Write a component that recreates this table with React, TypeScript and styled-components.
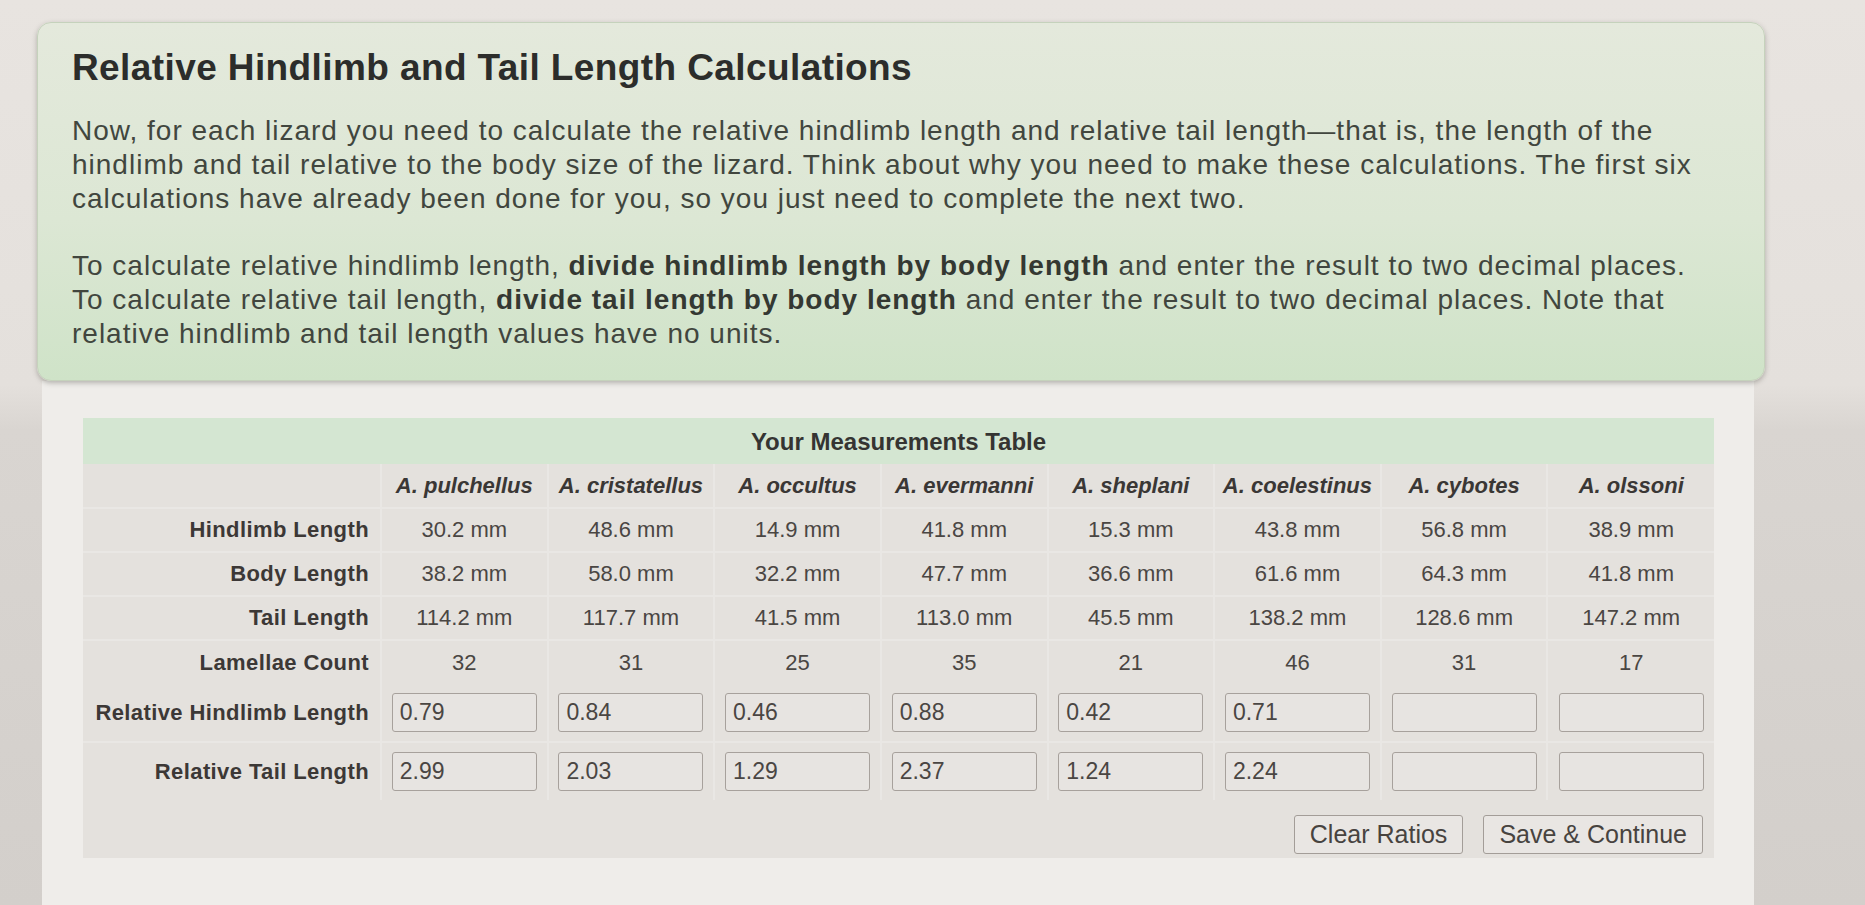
import React from "react";
import styled, { createGlobalStyle } from "styled-components";

const GlobalStyle = createGlobalStyle`
  html, body {
    margin: 0;
    padding: 0;
  }
  body {
    width: 1865px;
    height: 905px;
    overflow: hidden;
    font-family: "Liberation Sans", Arial, Helvetica, sans-serif;
    background: linear-gradient(
      to bottom,
      #e8e4e0 0px,
      #e4e0dc 385px,
      #d9d5d1 430px,
      #d3cfcb 905px
    );
  }
`;

const Page = styled.div`
  display: flex;
  flex-direction: column;
  padding-top: 22px;
  height: 883px;
`;

const Card = styled.section`
  position: relative;
  z-index: 1;
  margin-left: 37px;
  width: 1728px;
  height: 359px;
  box-sizing: border-box;
  padding: 24px 50px 0 34px;
  border-radius: 14px;
  border: 1px solid #c5d2bc;
  background: linear-gradient(to bottom, #e4e9dc 0%, #dce7d4 55%, #cfe3c8 100%);
  box-shadow: 0 2px 5px rgba(70, 70, 60, 0.35);
  color: #41463e;
`;

const Title = styled.h1`
  margin: 0;
  font-size: 37px;
  line-height: 42px;
  font-weight: 700;
  letter-spacing: 0.4px;
  color: #2c2d2b;
`;

const Paragraph = styled.p<{ $gap: number }>`
  margin: ${(p) => p.$gap}px 0 0;
  font-size: 28px;
  line-height: 34px;
  letter-spacing: 1px;

  strong {
    font-weight: 700;
    color: #343832;
  }
`;

const Panel = styled.main`
  flex: 1;
  margin-left: 42px;
  width: 1712px;
  box-sizing: border-box;
  padding: 37px 40px 0 41px;
  background: #efedea;
`;

const TableArea = styled.div`
  background: #e4e1dd;
  padding-bottom: 4px;
`;

const Table = styled.table`
  width: 100%;
  border-collapse: collapse;
  table-layout: fixed;
  color: #474340;
`;

const Caption = styled.caption`
  height: 46px;
  line-height: 48px;
  background: #d4e6d2;
  font-size: 24px;
  font-weight: 700;
  color: #353432;
  text-align: center;
`;

const Row = styled.tr<{ $tall?: boolean }>`
  height: ${(p) => (p.$tall ? 58 : 44)}px;

  & + & > * {
    border-top: 2px solid #e9e7e4;
  }
  & > * + * {
    border-left: 2px solid #e9e7e4;
  }
`;

const Corner = styled.td`
  padding: 0;
`;

const Species = styled.th`
  padding: 0;
  font-size: 22px;
  font-weight: 700;
  font-style: italic;
  text-align: center;
  color: #3a3735;
  white-space: nowrap;
`;

const Label = styled.th`
  padding: 0 11px 0 0;
  font-size: 22px;
  font-weight: 700;
  letter-spacing: 0.4px;
  text-align: right;
  color: #3c3836;
  white-space: nowrap;
`;

const Value = styled.td`
  padding: 0;
  font-size: 22px;
  text-align: center;
  color: #4a4643;
`;

const InputCell = styled.td`
  padding: 0;
  text-align: center;
  vertical-align: middle;
`;

const RatioInput = styled.input`
  display: block;
  margin: 0 auto;
  width: 145px;
  height: 39px;
  box-sizing: border-box;
  padding: 0 0 0 7px;
  border: 1px solid #a7a19c;
  border-radius: 3px;
  background: #e7e4e1;
  font-family: "Liberation Sans", Arial, sans-serif;
  font-size: 23px;
  color: #4a4643;
  outline: none;
`;

const ButtonRow = styled.div`
  display: flex;
  justify-content: flex-end;
  gap: 20px;
  padding: 15px 11px 0 0;
`;

const Button = styled.button`
  height: 39px;
  padding: 0 15px;
  border: 1px solid #a39d98;
  border-radius: 3px;
  background: #e9e6e3;
  font-family: "Liberation Sans", Arial, sans-serif;
  font-size: 25px;
  color: #47433f;
  cursor: pointer;
`;

type Lizard = {
  name: string;
  hindlimb: string;
  body: string;
  tail: string;
  lamellae: string;
  relHind: string;
  relTail: string;
};

const lizards: Lizard[] = [
  { name: "A. pulchellus", hindlimb: "30.2 mm", body: "38.2 mm", tail: "114.2 mm", lamellae: "32", relHind: "0.79", relTail: "2.99" },
  { name: "A. cristatellus", hindlimb: "48.6 mm", body: "58.0 mm", tail: "117.7 mm", lamellae: "31", relHind: "0.84", relTail: "2.03" },
  { name: "A. occultus", hindlimb: "14.9 mm", body: "32.2 mm", tail: "41.5 mm", lamellae: "25", relHind: "0.46", relTail: "1.29" },
  { name: "A. evermanni", hindlimb: "41.8 mm", body: "47.7 mm", tail: "113.0 mm", lamellae: "35", relHind: "0.88", relTail: "2.37" },
  { name: "A. sheplani", hindlimb: "15.3 mm", body: "36.6 mm", tail: "45.5 mm", lamellae: "21", relHind: "0.42", relTail: "1.24" },
  { name: "A. coelestinus", hindlimb: "43.8 mm", body: "61.6 mm", tail: "138.2 mm", lamellae: "46", relHind: "0.71", relTail: "2.24" },
  { name: "A. cybotes", hindlimb: "56.8 mm", body: "64.3 mm", tail: "128.6 mm", lamellae: "31", relHind: "", relTail: "" },
  { name: "A. olssoni", hindlimb: "38.9 mm", body: "41.8 mm", tail: "147.2 mm", lamellae: "17", relHind: "", relTail: "" },
];

const dataRows: { label: string; key: keyof Lizard }[] = [
  { label: "Hindlimb Length", key: "hindlimb" },
  { label: "Body Length", key: "body" },
  { label: "Tail Length", key: "tail" },
  { label: "Lamellae Count", key: "lamellae" },
];

const inputRows: { label: string; key: keyof Lizard }[] = [
  { label: "Relative Hindlimb Length", key: "relHind" },
  { label: "Relative Tail Length", key: "relTail" },
];

export default function App() {
  return (
    <>
      <GlobalStyle />
      <Page>
        <Card>
          <Title>Relative Hindlimb and Tail Length Calculations</Title>
          <Paragraph $gap={25}>
            Now, for each lizard you need to calculate the relative hindlimb length and relative tail
            length—that is, the length of the hindlimb and tail relative to the body size of the lizard.
            Think about why you need to make these calculations. The first six calculations have already
            been done for you, so you just need to complete the next two.
          </Paragraph>
          <Paragraph $gap={33}>
            To calculate relative hindlimb length, <strong>divide hindlimb length by body length</strong>{" "}
            and enter the result to two decimal places. To calculate relative tail length,{" "}
            <strong>divide tail length by body length</strong> and enter the result to two decimal
            places. Note that relative hindlimb and tail length values have no units.
          </Paragraph>
        </Card>
        <Panel>
          <TableArea>
            <Table>
              <Caption>Your Measurements Table</Caption>
              <colgroup>
                <col style={{ width: "298px" }} />
                {lizards.map((l) => (
                  <col key={l.name} />
                ))}
              </colgroup>
              <tbody>
                <Row>
                  <Corner />
                  {lizards.map((l) => (
                    <Species key={l.name}>{l.name}</Species>
                  ))}
                </Row>
                {dataRows.map((r) => (
                  <Row key={r.key}>
                    <Label>{r.label}</Label>
                    {lizards.map((l) => (
                      <Value key={l.name}>{l[r.key]}</Value>
                    ))}
                  </Row>
                ))}
                {inputRows.map((r) => (
                  <Row key={r.key} $tall>
                    <Label>{r.label}</Label>
                    {lizards.map((l) => (
                      <InputCell key={l.name}>
                        <RatioInput type="text" defaultValue={l[r.key]} aria-label={`${r.label} ${l.name}`} />
                      </InputCell>
                    ))}
                  </Row>
                ))}
              </tbody>
            </Table>
            <ButtonRow>
              <Button type="button">Clear Ratios</Button>
              <Button type="button">Save &amp; Continue</Button>
            </ButtonRow>
          </TableArea>
        </Panel>
      </Page>
    </>
  );
}
